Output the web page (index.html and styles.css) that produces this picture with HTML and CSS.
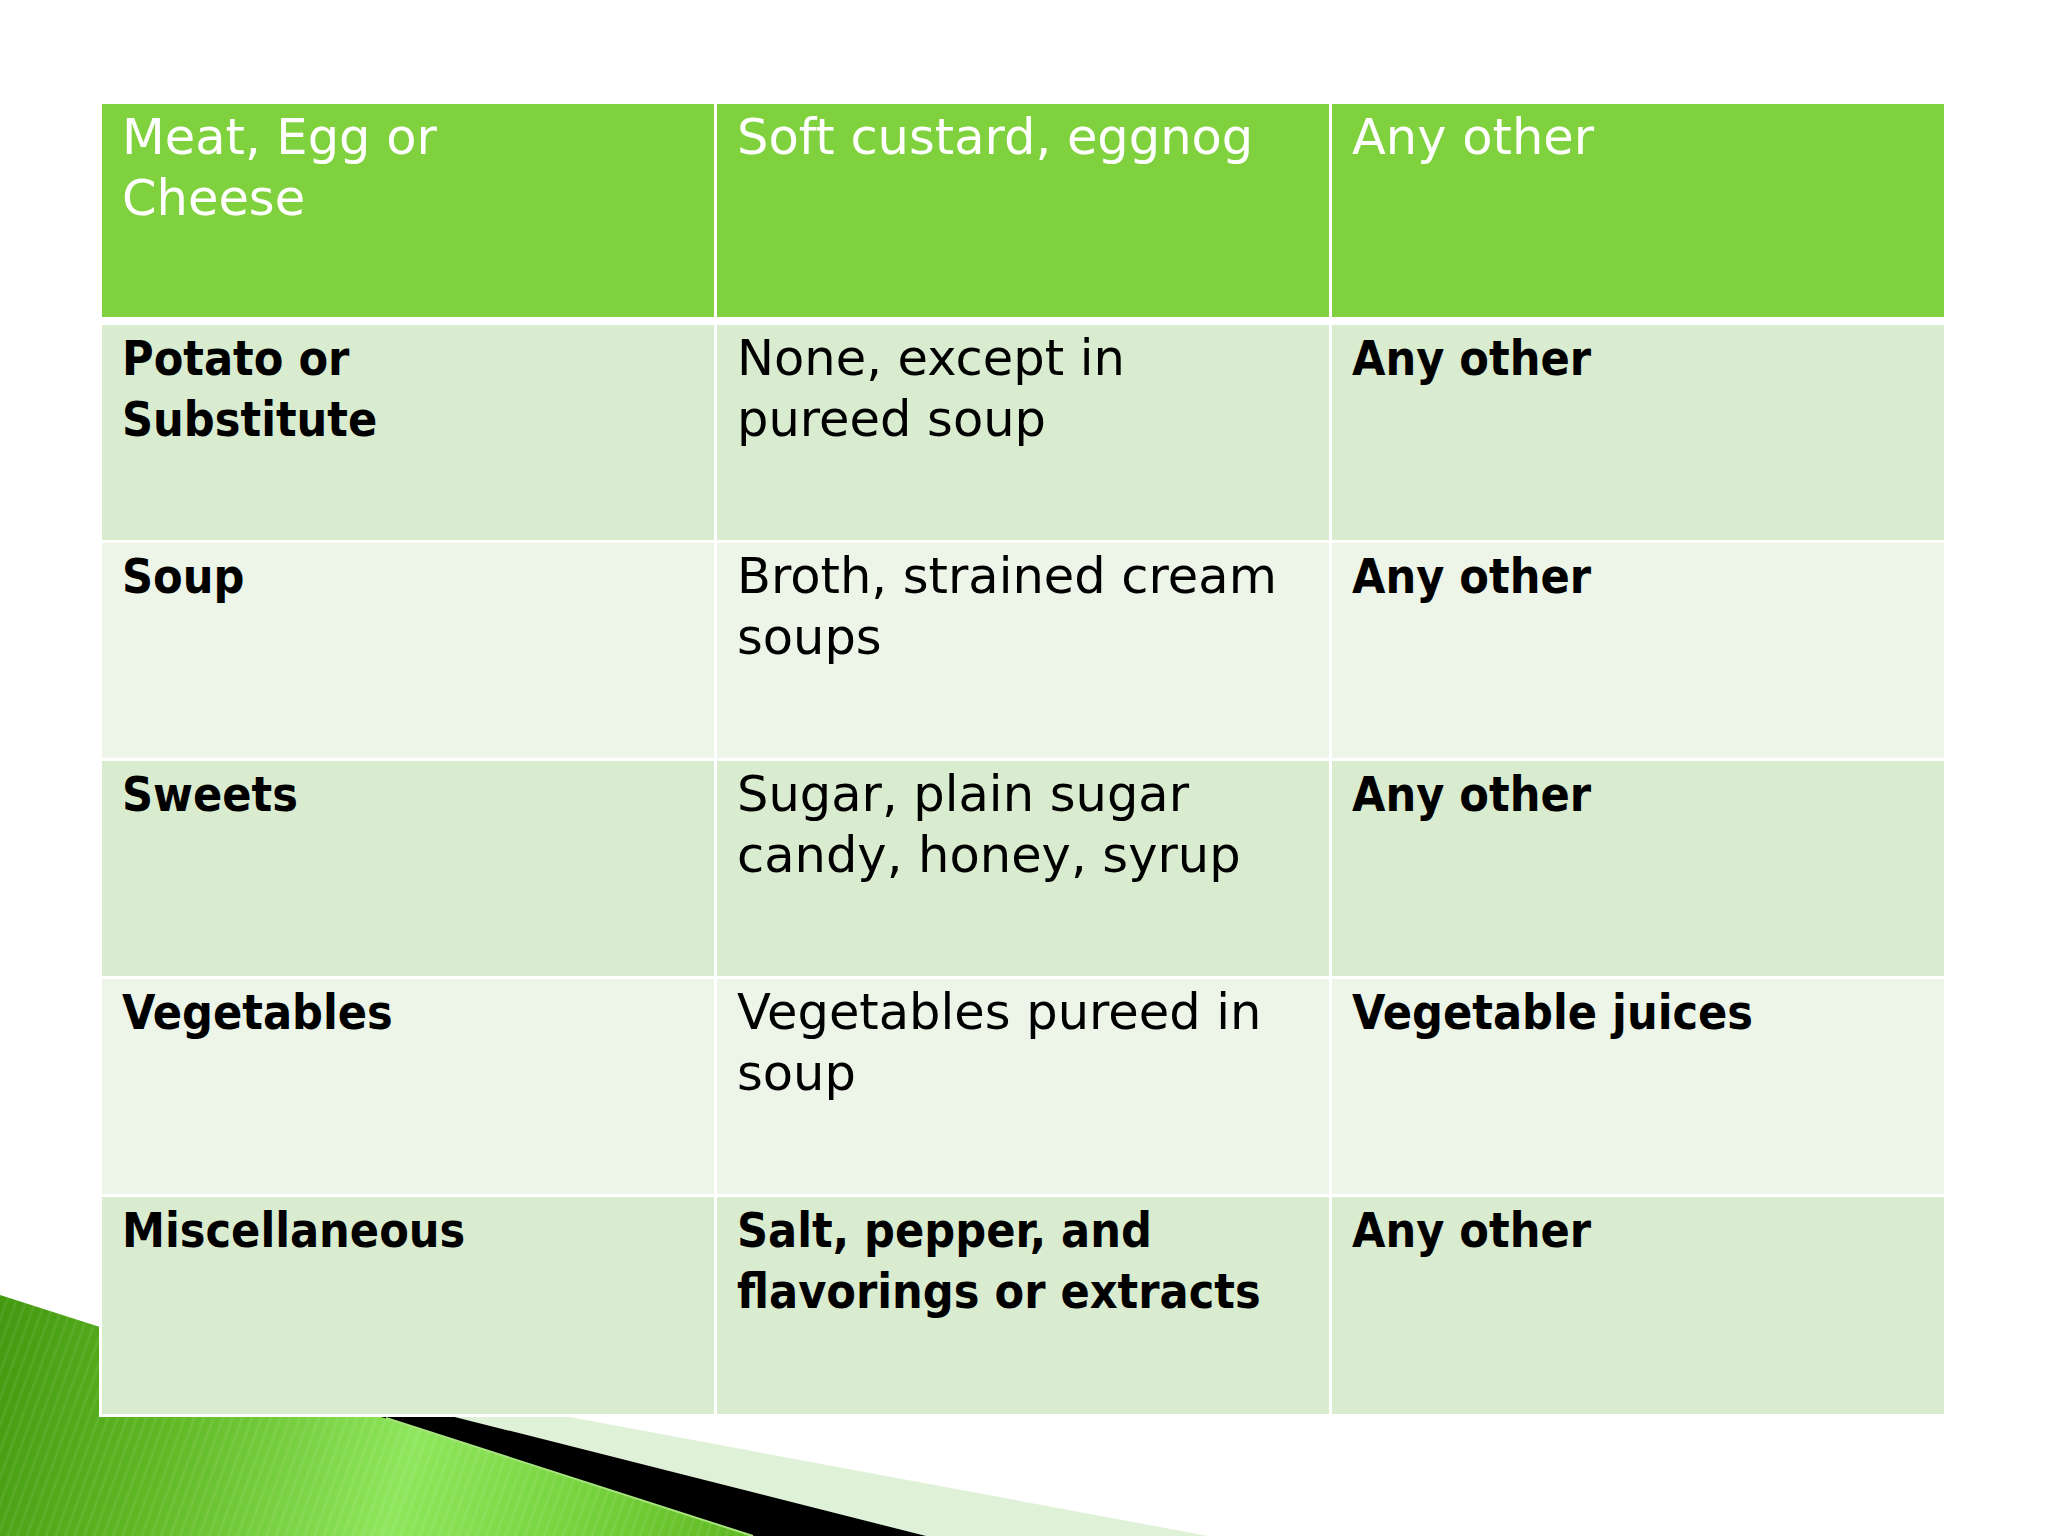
FILE: index.html
```html
<!DOCTYPE html>
<html lang="en">
<head>
<meta charset="utf-8">
<title>Diet table</title>
<link rel="stylesheet" href="styles.css">
</head>
<body>
<div class="slide">
  <svg class="deco" width="2048" height="1536" viewBox="0 0 2048 1536" aria-hidden="true">
    <defs>
      <linearGradient id="grn" x1="0" y1="1300" x2="760" y2="1536" gradientUnits="userSpaceOnUse">
        <stop offset="0" stop-color="#42980f"/>
        <stop offset="0.25" stop-color="#5fb824"/>
        <stop offset="0.55" stop-color="#8ee75c"/>
        <stop offset="0.8" stop-color="#74d03a"/>
        <stop offset="1" stop-color="#5cb51e"/>
      </linearGradient>
      <pattern id="stripes" width="9" height="9" patternUnits="userSpaceOnUse" patternTransform="rotate(20)">
        <rect width="3" height="9" fill="#ffffff" opacity="0.07"/>
      </pattern>
    </defs>
    <polygon points="0,1311 1208,1536 0,1536" fill="#dff1d6"/>
    <polygon points="0,1302 926,1536 0,1536" fill="#000000"/>
    <polygon points="0,1295 753,1536 0,1536" fill="url(#grn)"/>
    <polygon points="0,1295 753,1536 0,1536" fill="url(#stripes)"/>
    <line x1="386" y1="1418" x2="753" y2="1536" stroke="#a6e67c" stroke-width="2"/>
  </svg>

  <div class="table">
    <div class="cell head">Meat, Egg or<br>Cheese</div>
    <div class="cell head">Soft custard, eggnog</div>
    <div class="cell head">Any other</div>

    <div class="cell odd b">Potato or<br>Substitute</div>
    <div class="cell odd">None, except in<br>pureed soup</div>
    <div class="cell odd b">Any other</div>

    <div class="cell even b">Soup</div>
    <div class="cell even">Broth, strained cream<br>soups</div>
    <div class="cell even b">Any other</div>

    <div class="cell odd b">Sweets</div>
    <div class="cell odd">Sugar, plain sugar<br>candy, honey, syrup</div>
    <div class="cell odd b">Any other</div>

    <div class="cell even b">Vegetables</div>
    <div class="cell even">Vegetables pureed in<br>soup</div>
    <div class="cell even b">Vegetable juices</div>

    <div class="cell odd b">Miscellaneous</div>
    <div class="cell odd b">Salt, pepper, and<br>flavorings or extracts</div>
    <div class="cell odd b">Any other</div>
  </div>
</div>
</body>
</html>
```
FILE: styles.css
```css
html, body {
  margin: 0;
  padding: 0;
  background: #ffffff;
}

.slide {
  position: relative;
  width: 2048px;
  height: 1536px;
  overflow: hidden;
  background: #ffffff;
  padding: 101px 0 0 99px;
  box-sizing: border-box;
}

.deco {
  position: absolute;
  left: 0;
  top: 0;
  z-index: 0;
}

.table {
  position: relative;
  z-index: 1;
  display: grid;
  grid-template-columns: repeat(3, 612px);
  grid-template-rows: 218px repeat(4, 215px) 217px;
  gap: 3px;
  padding: 3px;
  width: max-content;
  background: #ffffff;
}

.cell {
  font-family: "DejaVu Sans", Verdana, sans-serif;
  font-size: 49.5px;
  line-height: 61px;
  color: #000000;
  padding: 3px 20px 0 20px;
  white-space: nowrap;
  box-sizing: border-box;
}

.cell.b {
  font-family: "DejaVu Sans Condensed", "DejaVu Sans", sans-serif;
  font-stretch: condensed;
  font-weight: bold;
  font-size: 48px;
}

.head {
  background: #80d13e;
  color: #ffffff;
  margin-bottom: 5px;
}

.odd {
  background: #daecd0;
}

.even {
  background: #ecf5e8;
}
```
